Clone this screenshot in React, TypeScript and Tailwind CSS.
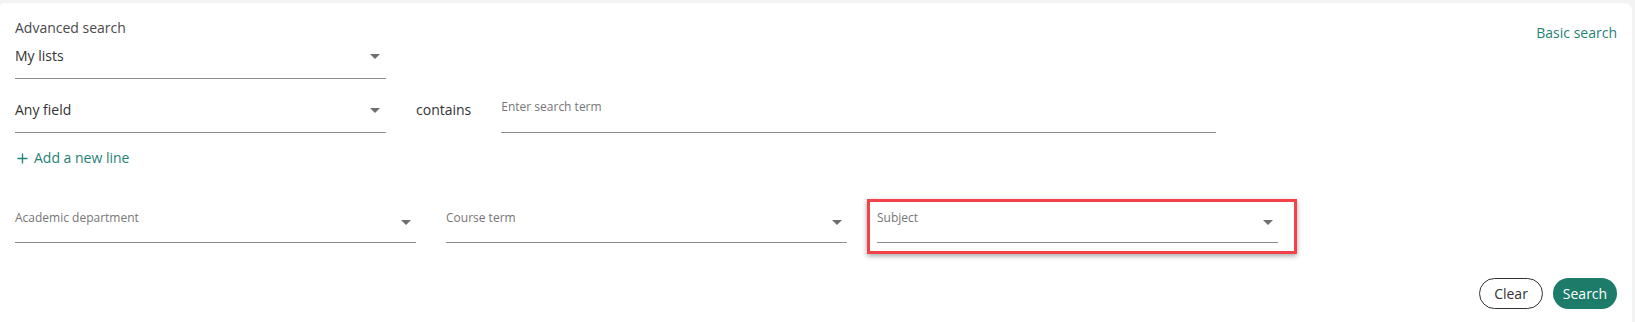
import React from "react";

const Arrow = () => (
  <svg width="10" height="5" viewBox="0 0 10 5" className="shrink-0">
    <path d="M0 0 L10 0 L5 5 Z" fill="#6f6f6f" />
  </svg>
);

const BigSelect = ({ text, w }: { text: string; w: string }) => (
  <div className={`${w} border-b border-[#8d8d8d] pb-[12px]`}>
    <div className="flex items-center justify-between h-[20px] pr-[6px]">
      <span className="text-[14px] leading-[20px] text-[#333]">{text}</span>
      <Arrow />
    </div>
  </div>
);

const SmallSelect = ({ label }: { label: string }) => (
  <div className="w-[401px] border-b border-[#8d8d8d] pb-[16px]">
    <div className="flex items-start justify-between h-[16px] pr-[5px]">
      <span className="text-[12px] leading-[16px] text-[#767676]">{label}</span>
      <span className="mt-[10px]">
        <Arrow />
      </span>
    </div>
  </div>
);

export default function App() {
  return (
    <div
      className="min-h-screen bg-[#f3f3f3] pt-[3px] pr-[3px]"
      style={{ fontFamily: '"Open Sans", "Liberation Sans", sans-serif' }}
    >
      <div className="bg-white rounded-tr-lg rounded-tl-[4px] h-[319px] pl-[15px] pr-[15px] pt-[15px]">
        <div className="flex justify-between">
          <div className="text-[14px] leading-[20px] text-[#4a4a4a]">Advanced search</div>
          <div className="text-[14px] leading-[20px] text-[#1f8275] mt-[5px]">Basic search</div>
        </div>
        <div className="mt-[3px]">
          <BigSelect text="My lists" w="w-[371px]" />
        </div>
        <div className="mt-[21px] flex items-start">
          <BigSelect text="Any field" w="w-[371px]" />
          <div className="ml-[30px] text-[14px] leading-[20px] text-[#333]">contains</div>
          <div className="ml-[30px] w-[715px] border-b border-[#8d8d8d] h-[34px] mt-[-1px]">
            <span className="text-[12px] leading-[16px] text-[#767676] block">Enter search term</span>
          </div>
        </div>
        <div className="mt-[15px] flex items-center h-[20px] text-[#1f8275]">
          <svg width="11" height="11" viewBox="0 0 11 11" className="ml-[2px]">
            <path d="M5.5 0.5 V10.5 M0.5 5.5 H10.5" stroke="#1f8275" strokeWidth="1.3" />
          </svg>
          <span className="ml-[6px] text-[14px] leading-[20px]">Add a new line</span>
        </div>
        <div className="mt-[42px] flex gap-[30px]">
          <SmallSelect label="Academic department" />
          <SmallSelect label="Course term" />
          <div className="relative">
            <SmallSelect label="Subject" />
            <div className="absolute left-[-10px] top-[-11px] w-[430px] h-[55px] border-[3px] border-[#f3424a] shadow-[0_2px_5px_rgba(0,0,0,0.35)]" />
          </div>
        </div>
        <div className="mt-[35px] flex justify-end gap-[10px]">
          <button className="h-[31px] w-[64px] rounded-full border border-[#333] text-[14px] text-[#333] bg-white">
            Clear
          </button>
          <button className="h-[31px] w-[64px] rounded-full bg-[#1c7b69] text-[14px] text-white font-medium">
            Search
          </button>
        </div>
      </div>
    </div>
  );
}
